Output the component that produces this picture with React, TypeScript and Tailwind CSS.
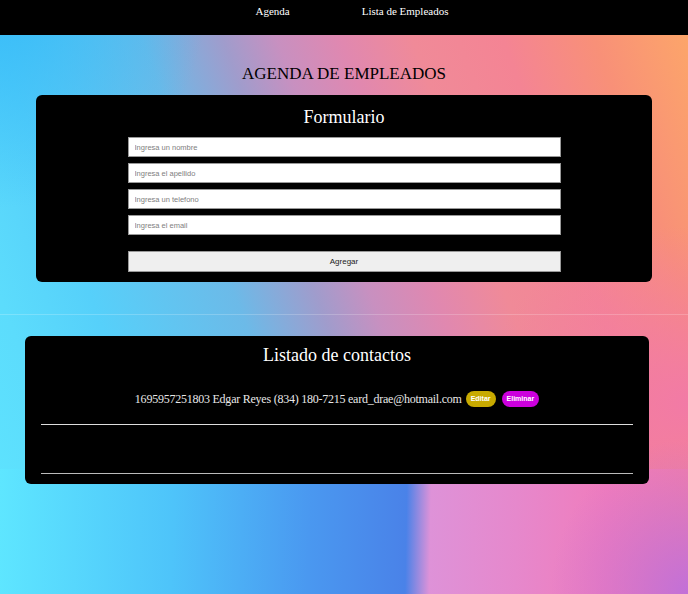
export default function App() {
  const fields = [
    "Ingresa un nombre",
    "Ingresa el apellido",
    "Ingresa un telefono",
    "Ingresa el email",
  ];

  const contactos = [
    { id: "1695957251803", nombre: "Edgar Reyes", telefono: "(834) 180-7215", email: "eard_drae@hotmail.com" },
  ];

  return (
    <div
      className="min-h-[594px] w-full bg-no-repeat bg-[radial-gradient(ellipse_20%_26%_at_100%_100%,#c270d8_0%,rgba(194,112,216,0)_100%),linear-gradient(91deg,#5ee6ff_0%,#4ec4fa_25%,#4a98f0_45%,#4a82e8_59%,#de92d8_62.5%,#e688cc_75%,#f07cbc_88%,#f27ea8_100%),radial-gradient(ellipse_30%_30%_at_100%_68%,#f27aa6_0%,rgba(242,122,166,0)_100%),radial-gradient(ellipse_30%_35%_at_0%_0%,#38bcf8_0%,rgba(56,188,248,0)_100%),linear-gradient(70deg,#5ee6ff_0%,#5cdcfc_12%,#56d0fa_22%,#6cbae8_38%,#a09ccc_47%,#c890c0_53%,#e088b0_60%,#f08a98_68%,#f48494_78%,#f89078_88%,#fda868_100%)] [background-size:100%_100%,100%_125px,100%_100%,100%_100%,100%_100%] [background-position:0_0,0_100%,0_0,0_0,0_0]"
      style={{ fontFamily: '"Liberation Serif", "Times New Roman", serif' }}
    >
      {/* Nav */}
      <nav className="h-[35px] bg-black pl-4 pt-[3px]">
        <ul className="flex justify-center gap-[72px] text-[11px] text-white">
          <li>Agenda</li>
          <li>Lista de Empleados</li>
        </ul>
      </nav>

      {/* Formulario */}
      <section className="border-b border-white/20 pb-8 pt-[28px]">
        <h1 className="text-center text-[17px] leading-[22px] text-black">AGENDA DE EMPLEADOS</h1>
        <div className="mx-[36px] mt-[10px] rounded-md bg-black pb-[10px] pt-[8px]">
          <h2 className="text-center text-[18px] leading-[28px] text-white">Formulario</h2>
          <form className="mx-auto mt-[6px] flex w-[433px] flex-col gap-[6px]">
            {fields.map((f) => (
              <input
                key={f}
                placeholder={f}
                className="h-[20px] border border-[#999] bg-white px-[6px] text-[7.5px] text-black placeholder:text-[#808080]"
                style={{ fontFamily: '"Liberation Sans", Arial, sans-serif' }}
              />
            ))}
            <button
              type="button"
              className="mt-[10px] h-[21px] border border-[#999] bg-[#efefef] text-[8px] text-[#222]"
              style={{ fontFamily: '"Liberation Sans", Arial, sans-serif' }}
            >
              Agregar
            </button>
          </form>
        </div>
      </section>

      {/* Listado */}
      <section className="pt-[21px]">
        <div className="ml-[25px] w-[624px] rounded-md bg-black px-[16px] pb-[10px] pt-[6px]">
          <h2 className="text-center text-[18px] leading-[26px] text-white">Listado de contactos</h2>
          {contactos.map((c) => (
            <div key={c.id} className="mt-[22px] flex items-center justify-center gap-[4px] text-[12px] tracking-[-0.02em] text-[#e8e8e8]">
              <span>
                {c.id} {c.nombre} {c.telefono} {c.email}
              </span>
              <button
                className="h-[16px] rounded-full bg-[#c8aa00] px-[5px] text-[7px] font-bold tracking-normal text-white"
                style={{ fontFamily: '"Liberation Sans", Arial, sans-serif' }}
              >
                Editar
              </button>
              <button
                className="ml-[2px] h-[16px] rounded-full bg-[#cc00dd] px-[5px] text-[7px] font-bold tracking-normal text-white"
                style={{ fontFamily: '"Liberation Sans", Arial, sans-serif' }}
              >
                Eliminar
              </button>
            </div>
          ))}
          <hr className="mt-[16px] border-t border-[#ddd]" />
          <hr className="mt-[48px] border-t border-[#bbb]" />
        </div>
      </section>
    </div>
  );
}
